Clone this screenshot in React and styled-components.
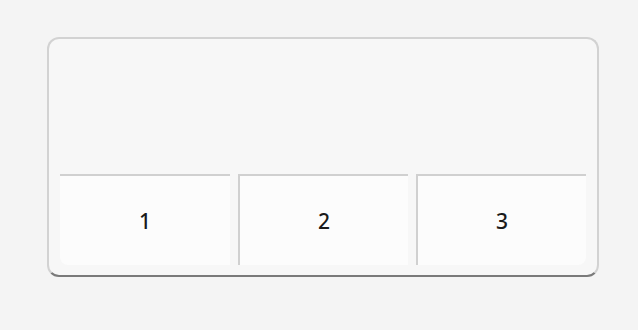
import React from "react";
import styled, { createGlobalStyle } from "styled-components";

const Global = createGlobalStyle`
  html, body { margin: 0; padding: 0; background: #f4f4f4; }
  * { box-sizing: border-box; }
`;

const Page = styled.div`
  padding: 37px 39px 0 47px;
  font-family: "Noto Sans", "Open Sans", sans-serif;
`;

const Card = styled.div`
  width: 552px;
  height: 240px;
  background: #f7f7f7;
  border: 2px solid #d2d2d2;
  border-bottom-color: #7a7a7a;
  border-radius: 12px;
  display: flex;
  flex-direction: column;
  justify-content: flex-end;
  padding: 0 11px 10px 11px;
`;

const Row = styled.div`
  display: grid;
  grid-template-columns: repeat(3, 1fr);
  gap: 8px;
  height: 91px;
`;

const Key = styled.button`
  appearance: none;
  margin: 0;
  padding: 0;
  background: #fcfcfc;
  border: none;
  border-top: 2px solid #d0d0d0;
  border-left: ${(p) => (p.$first ? "none" : "2px solid #d0d0d0")};
  border-radius: ${(p) =>
    p.$first ? "0 0 0 8px" : p.$last ? "0 0 8px 0" : "0"};
  font-family: inherit;
  font-size: 21px;
  font-weight: 500;
  color: #1a1a1a;
  display: flex;
  align-items: center;
  justify-content: center;
`;

export default function App() {
  const keys = ["1", "2", "3"];
  return (
    <>
      <Global />
      <Page>
        <Card>
          <Row>
            {keys.map((k, i) => (
              <Key key={k} $first={i === 0} $last={i === keys.length - 1}>
                {k}
              </Key>
            ))}
          </Row>
        </Card>
      </Page>
    </>
  );
}
